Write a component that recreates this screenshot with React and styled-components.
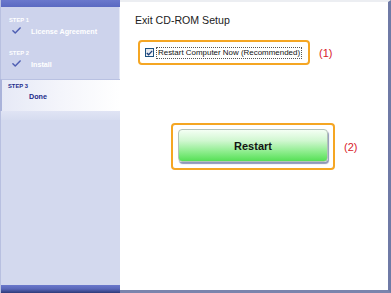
import React from "react";
import styled, { createGlobalStyle } from "styled-components";

const Global = createGlobalStyle`
  html, body { margin: 0; padding: 0; background: #fff; }
  body { font-family: "Liberation Sans", Arial, sans-serif; }
  #root { width: 391px; height: 293px; overflow: hidden; }
`;

const Frame = styled.div`
  width: 391px;
  height: 293px;
  display: flex;
  box-sizing: border-box;
  background: #fff;
`;

const Sidebar = styled.div`
  width: 120px;
  height: 293px;
  display: flex;
  flex-direction: column;
  background: #d3d9ee;
  box-sizing: border-box;
  border-left: 1px solid #b8c0e0;
`;

const TopStrip = styled.div`
  height: 7px;
  background: linear-gradient(#6a78cc, #5a69c2);
`;

const DoneSteps = styled.div`
  height: 72px;
  background: #cdd3ec;
  border-right: 1px solid #e4e8f6;
  padding-top: 10px;
  box-sizing: border-box;
`;

const Step = styled.div`
  height: ${(p) => p.$h || 33}px;
  display: flex;
  flex-direction: column;
`;

const StepLabel = styled.div`
  font-size: 5.8px;
  font-weight: bold;
  color: ${(p) => (p.$active ? "#1c2a8a" : "#ffffff")};
  padding-left: ${(p) => (p.$active ? 6 : 8)}px;
  line-height: 7px;
`;

const StepRow = styled.div`
  display: flex;
  align-items: center;
  height: 12px;
  margin-top: ${(p) => (p.$tight ? 0 : 1)}px;
`;

const CheckSlot = styled.div`
  width: ${(p) => (p.$active ? 27 : 30)}px;
  display: flex;
  justify-content: flex-start;
  padding-left: 11px;
  box-sizing: border-box;
`;

const StepName = styled.div`
  font-size: 7.2px;
  font-weight: bold;
  color: ${(p) => (p.$active ? "#1c2a8a" : "#ffffff")};
`;

const ActiveStep = styled.div`
  height: 32px;
  background: linear-gradient(90deg, #e6e9f6 0%, #f4f5fb 50%, #ffffff 100%);
  border-top: 1px solid #b9c1e2;
  border-left: 2px solid #aab3da;
  margin-left: -1px;
  box-sizing: border-box;
  padding-top: 3px;
`;

const AfterActive = styled.div`
  height: 9px;
  background: linear-gradient(#e0e4f4, #d6dcf0);
`;

const SideFill = styled.div`
  flex: 1;
  background: #d3d9ee;
`;

const BottomStrip = styled.div`
  height: 8px;
  background: linear-gradient(#6a78cc 0%, #5866b8 50%, #2d3a78 100%);
`;

const Main = styled.div`
  flex: 1;
  height: 293px;
  display: flex;
  flex-direction: column;
  box-sizing: border-box;
  border-right: 3px solid #6f7aa6;
  border-bottom: 3px solid #7a84ad;
  border-top: 2px solid #eceef2;
  background: #fff;
`;

const Title = styled.div`
  font-size: 10.6px;
  color: #222;
  margin: 11px 0 0 15px;
  line-height: 14px;
`;

const Highlight = styled.div`
  border: 2px solid #f5a623;
  border-radius: 4px;
  box-sizing: border-box;
  display: flex;
  align-items: center;
  flex-shrink: 0;
`;

const OptionRow = styled.div`
  display: flex;
  align-items: center;
  margin: 13px 0 0 18px;
`;

const OptionBox = styled(Highlight)`
  width: 172px;
  height: 25px;
  padding-left: 5px;
`;

const CheckBox = styled.div`
  width: 9px;
  height: 9px;
  border: 1px solid #1c5180;
  background: linear-gradient(135deg, #dfe3ea, #f8f9fb);
  display: flex;
  align-items: center;
  justify-content: center;
  box-sizing: border-box;
  flex-shrink: 0;
`;

const OptionText = styled.span`
  font-size: 7.95px;
  color: #111;
  margin-left: 2px;
  border: 1px dotted #555;
  padding: 0 1px;
  line-height: 10px;
  white-space: nowrap;
`;

const Marker = styled.span`
  color: #d8202a;
  font-size: 11px;
  margin-left: ${(p) => p.$ml}px;
`;

const ButtonRow = styled.div`
  display: flex;
  align-items: center;
  margin: 58px 0 0 51px;
`;

const ButtonBox = styled(Highlight)`
  width: 164px;
  height: 47px;
  justify-content: center;
`;

const GreenButton = styled.button`
  width: 150px;
  height: 33px;
  border: 1px solid #b3c2b8;
  border-radius: 4px;
  background: linear-gradient(#f4fff4 0%, #d0f7d0 35%, #8ded8d 70%, #56e056 100%);
  box-shadow: 1px 2px 1px #8e98b8;
  font-family: "Liberation Sans", Arial, sans-serif;
  font-weight: bold;
  font-size: 11px;
  color: #151515;
  padding: 0;
  margin-top: -2px;
`;

const Check = ({ color, size = 9 }) => (
  <svg width={size} height={size * 0.8} viewBox="0 0 10 8">
    <path d="M1 4.2 L3.6 6.8 L9 1" fill="none" stroke={color} strokeWidth="1.6" strokeLinecap="round" strokeLinejoin="round" />
  </svg>
);

export default function App() {
  return (
    <>
      <Global />
      <Frame>
        <Sidebar>
          <TopStrip />
          <DoneSteps>
            <Step $h={33}>
              <StepLabel>STEP 1</StepLabel>
              <StepRow>
                <CheckSlot><Check color="#4f5fb3" /></CheckSlot>
                <StepName>License Agreement</StepName>
              </StepRow>
            </Step>
            <Step $h={28}>
              <StepLabel>STEP 2</StepLabel>
              <StepRow>
                <CheckSlot><Check color="#4f5fb3" /></CheckSlot>
                <StepName>Install</StepName>
              </StepRow>
            </Step>
          </DoneSteps>
          <ActiveStep>
            <StepLabel $active>STEP 3</StepLabel>
            <StepRow $tight>
              <CheckSlot $active />
              <StepName $active>Done</StepName>
            </StepRow>
          </ActiveStep>
          <AfterActive />
          <SideFill />
          <BottomStrip />
        </Sidebar>
        <Main>
          <Title>Exit CD-ROM Setup</Title>
          <OptionRow>
            <OptionBox>
              <CheckBox>
                <svg width="7" height="6" viewBox="0 0 7 6">
                  <path d="M0.8 3 L2.6 4.8 L6.2 0.9" fill="none" stroke="#1c3f7a" strokeWidth="1.3" />
                </svg>
              </CheckBox>
              <OptionText>Restart Computer Now (Recommended)</OptionText>
            </OptionBox>
            <Marker $ml={9}>(1)</Marker>
          </OptionRow>
          <ButtonRow>
            <ButtonBox>
              <GreenButton>Restart</GreenButton>
            </ButtonBox>
            <Marker $ml={9}>(2)</Marker>
          </ButtonRow>
        </Main>
      </Frame>
    </>
  );
}
